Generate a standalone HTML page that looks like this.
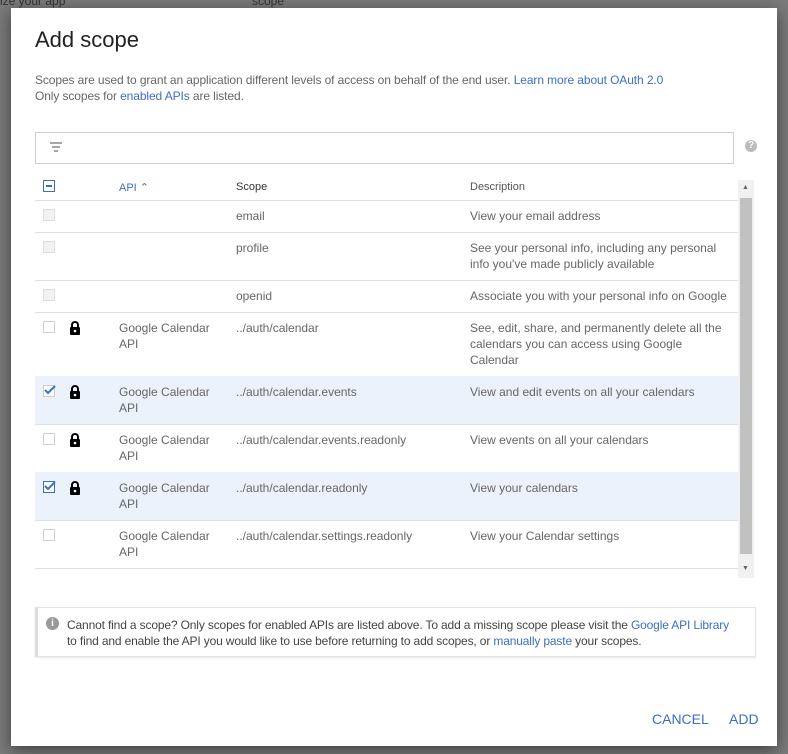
<!DOCTYPE html>
<html><head><style>
body{margin:0;width:788px;height:754px;background:#7b7b7b;font-family:"Liberation Sans",sans-serif;position:relative;overflow:hidden}
.dlg{position:absolute;left:11px;top:8px;width:766px;height:738px;background:#fff;box-shadow:0 4px 16px rgba(0,0,0,.5)}
.abs{position:absolute}
.t{font-size:12px;color:#666;line-height:16px}
a{color:#3b6fc4;text-decoration:none}
.row{position:absolute;left:24px;width:703px;border-bottom:1px solid #e0e0e0}
.hl{background:#ecf2fb}
.cb{position:absolute;left:8px;top:9px;width:10px;height:10px;border:1px solid #d0d0d0;background:#fff}
.cb.d{background:#f2f2f2;border-color:#ddd}
.lock{position:absolute;left:34px;top:9px}
.c1{position:absolute;left:84px;top:8px;width:110px}
.c2{position:absolute;left:201px;top:8px}
.c3{position:absolute;left:435px;top:8px;width:255px}
</style></head><body>
<div class="abs" style="left:0;top:-6px;font-size:12px;color:#333">ize your app</div>
<div class="abs" style="left:252px;top:-6px;font-size:12px;color:#333">scope</div>
<div class="dlg">
<div class="abs" style="left:24px;top:19px;font-size:22px;color:#222">Add scope</div>
<div class="abs t" style="left:24px;top:64px;letter-spacing:-0.1px">Scopes are used to grant an application different levels of access on behalf of the end user. <a>Learn more about OAuth 2.0</a><br>Only scopes for <a>enabled APIs</a> are listed.</div>
<div class="abs" style="left:24px;top:124px;width:697px;height:30px;border:1px solid #cfcfcf"></div>
<svg class="abs" style="left:38px;top:133px" width="14" height="12"><path d="M1 2h12M3 6h8M5 10h4" stroke="#888" stroke-width="1.5"/></svg>
<div class="abs" style="left:734px;top:132px;width:12px;height:12px;border-radius:50%;background:#bbb;color:#fff;font-size:10px;font-weight:bold;text-align:center;line-height:12px">?</div>
<div class="row" style="top:164px;height:28px">
<div class="cb" style="top:8px;border-color:#3b6fc4"><div style="position:absolute;left:2px;top:4px;width:6px;height:2px;background:#3b6fc4"></div></div>
<div class="abs" style="left:84px;top:9px;font-size:11px;color:#3b6fc4">API &#8963;</div>
<div class="abs" style="left:201px;top:9px;font-size:11px;color:#333">Scope</div>
<div class="abs" style="left:435px;top:9px;font-size:11px;color:#555">Description</div>
</div>
<div class="row t" style="top:192px;height:32px"><div class="cb d"></div><div class="c2">email</div><div class="c3">View your email address</div></div>
<div class="row t" style="top:224px;height:48px"><div class="cb d"></div><div class="c2">profile</div><div class="c3">See your personal info, including any personal info you've made publicly available</div></div>
<div class="row t" style="top:272px;height:32px"><div class="cb d"></div><div class="c2">openid</div><div class="c3" style="width:270px">Associate you with your personal info on Google</div></div>
<div class="row t" style="top:304px;height:64px"><div class="cb"></div><svg class="lock" width="12" height="14"><path d="M3 6V4a3 3 0 0 1 6 0v2" fill="none" stroke="#000" stroke-width="2"/><rect x="1" y="6" width="10" height="8" rx="1"/><circle cx="6" cy="10" r="1.3" fill="#fff"/></svg><div class="c1">Google Calendar API</div><div class="c2">../auth/calendar</div><div class="c3">See, edit, share, and permanently delete all the calendars you can access using Google Calendar</div></div>
<div class="row t hl" style="top:368px;height:48px"><div class="cb" style="border-color:#ccc"><svg width="12" height="10" style="position:absolute;left:0;top:-1px"><path d="M1 5l3 3 7-7" fill="none" stroke="#3b6fc4" stroke-width="2"/></svg></div><svg class="lock" width="12" height="14"><path d="M3 6V4a3 3 0 0 1 6 0v2" fill="none" stroke="#000" stroke-width="2"/><rect x="1" y="6" width="10" height="8" rx="1"/><circle cx="6" cy="10" r="1.3" fill="#fff"/></svg><div class="c1">Google Calendar API</div><div class="c2">../auth/calendar.events</div><div class="c3" style="width:270px">View and edit events on all your calendars</div></div>
<div class="row t" style="top:416px;height:48px"><div class="cb"></div><svg class="lock" width="12" height="14"><path d="M3 6V4a3 3 0 0 1 6 0v2" fill="none" stroke="#000" stroke-width="2"/><rect x="1" y="6" width="10" height="8" rx="1"/><circle cx="6" cy="10" r="1.3" fill="#fff"/></svg><div class="c1">Google Calendar API</div><div class="c2">../auth/calendar.events.readonly</div><div class="c3">View events on all your calendars</div></div>
<div class="row t hl" style="top:464px;height:48px"><div class="cb" style="border-color:#3b6fc4"><svg width="12" height="10" style="position:absolute;left:0;top:-1px"><path d="M1 5l3 3 7-7" fill="none" stroke="#3b6fc4" stroke-width="2"/></svg></div><svg class="lock" width="12" height="14"><path d="M3 6V4a3 3 0 0 1 6 0v2" fill="none" stroke="#000" stroke-width="2"/><rect x="1" y="6" width="10" height="8" rx="1"/><circle cx="6" cy="10" r="1.3" fill="#fff"/></svg><div class="c1">Google Calendar API</div><div class="c2">../auth/calendar.readonly</div><div class="c3">View your calendars</div></div>
<div class="row t" style="top:512px;height:48px"><div class="cb"></div><div class="c1">Google Calendar API</div><div class="c2">../auth/calendar.settings.readonly</div><div class="c3">View your Calendar settings</div></div>
<div class="abs" style="left:727px;top:172px;width:16px;height:398px;background:#f1f1f1"></div>
<div class="abs" style="left:729px;top:190px;width:12px;height:356px;background:#c1c1c1"></div>
<div class="abs" style="left:731px;top:176px;font-size:7px;color:#666">&#9650;</div>
<div class="abs" style="left:731px;top:557px;font-size:7px;color:#666">&#9660;</div>
<div class="abs t" style="left:24px;top:599px;width:717px;height:48px;border:1px solid #e4e4e4;border-left:3px solid #ddd;box-shadow:0 1px 2px rgba(0,0,0,.1)">
<div class="abs" style="left:8px;top:9px;width:13px;height:13px;border-radius:50%;background:#999;color:#fff;font-size:10px;font-weight:bold;text-align:center;line-height:13px">i</div>
<div class="abs" style="left:29px;top:9px;color:#444;width:670px;letter-spacing:-0.15px">Cannot find a scope? Only scopes for enabled APIs are listed above. To add a missing scope please visit the <a>Google API Library</a><br>to find and enable the API you would like to use before returning to add scopes, or <a>manually paste</a> your scopes.</div>
</div>
<div class="abs" style="left:641px;top:703px;font-size:14px;color:#3b6fc4">CANCEL</div>
<div class="abs" style="left:718px;top:703px;font-size:14px;color:#3b6fc4">ADD</div>
</div>
</body></html>
